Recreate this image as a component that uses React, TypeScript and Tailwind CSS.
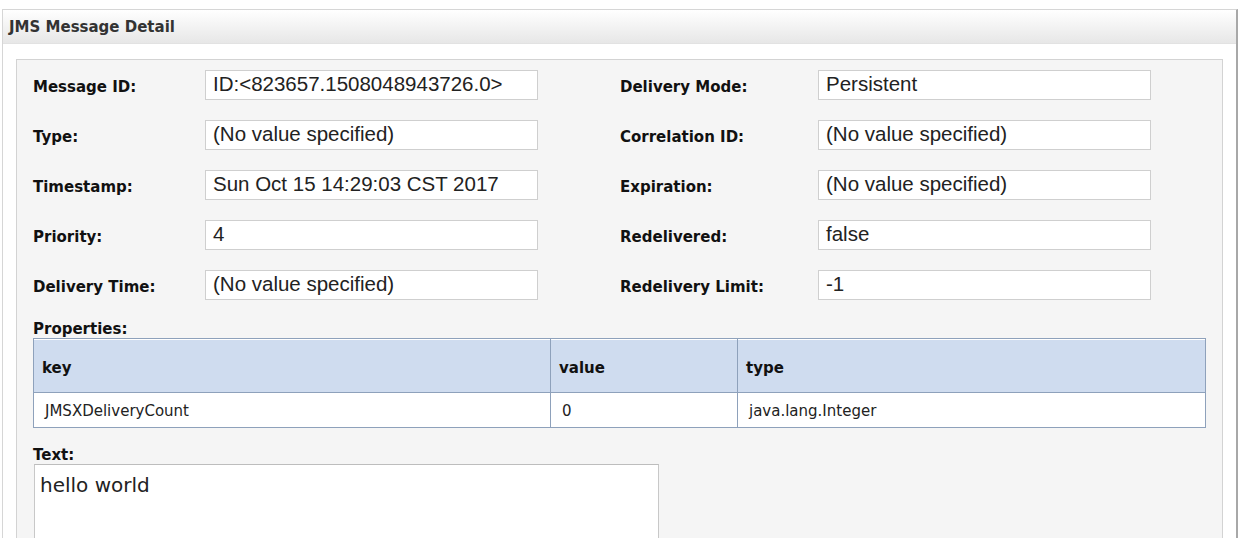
import React from "react";

const tahoma = "font-['DejaVu_Sans','Verdana',sans-serif]";
const arial = "font-['Liberation_Sans',Arial,sans-serif]";

interface FieldProps {
    label: string;
    value: string;
    labelWidth: string;
}

const Field: React.FC<FieldProps> = ({ label, value, labelWidth }) => (
    <div className="flex items-center h-[30px]">
        <div className={ `${ tahoma } ${ labelWidth } shrink-0 text-[15px] font-bold text-[#111] pt-[4px]` }>{ label }</div>
        <div className={ `${ arial } w-[333px] h-[30px] bg-white border border-[#cfcfcf] pl-[7px] text-[20.5px] leading-[25px] text-[#222] whitespace-nowrap overflow-hidden` }>
            { value }
        </div>
    </div>
);

const left = [
    { label: "Message ID:", value: "ID:<823657.1508048943726.0>" },
    { label: "Type:", value: "(No value specified)" },
    { label: "Timestamp:", value: "Sun Oct 15 14:29:03 CST 2017" },
    { label: "Priority:", value: "4" },
    { label: "Delivery Time:", value: "(No value specified)" },
];

const right = [
    { label: "Delivery Mode:", value: "Persistent" },
    { label: "Correlation ID:", value: "(No value specified)" },
    { label: "Expiration:", value: "(No value specified)" },
    { label: "Redelivered:", value: "false" },
    { label: "Redelivery Limit:", value: "-1" },
];

export default function App() {
    return (
        <div className="w-[1240px] h-[538px] overflow-hidden bg-white pt-[9px] pl-[2px]">
            <div className="w-[1236px] h-[540px] border border-[#d6d6d6] border-r-[#a8a8a8] border-r-2 bg-white">
                <div className="h-[34px] flex items-center pl-[6px] bg-gradient-to-b from-white to-[#e7e7e7] border-b border-[#e2e2e2]">
                    <span className={ `${ tahoma } text-[15px] font-bold text-[#333] pt-[2px]` }>JMS Message Detail</span>
                </div>
                <div className="pt-[15px] pl-[13px] pr-[13px]">
                    <div className="h-[500px] border border-[#d3d3d3] bg-[#f5f5f5] pt-[10px] pl-[16px]">
                        <div className="flex">
                            <div className="flex flex-col gap-[20px]">
                                { left.map((f) => <Field key={ f.label } label={ f.label } value={ f.value } labelWidth="w-[172px]" />) }
                            </div>
                            <div className="flex flex-col gap-[20px] ml-[82px]">
                                { right.map((f) => <Field key={ f.label } label={ f.label } value={ f.value } labelWidth="w-[198px]" />) }
                            </div>
                        </div>

                        <div className={ `${ tahoma } mt-[19px] pt-[1px] text-[15px] font-bold text-[#111] leading-[18px]` }>Properties:</div>
                        <table className={ `${ tahoma } w-[1173px] border-collapse text-[15px] text-[#222]` }>
                            <thead>
                                <tr className="h-[54px] bg-[#cfdcef]">
                                    <th className="w-[517px] border border-[#8ea1bb] text-left font-bold pl-[8px] text-[#111] shadow-[inset_0_1px_0_#fff] pt-[5px]">key</th>
                                    <th className="w-[187px] border border-[#8ea1bb] text-left font-bold pl-[8px] text-[#111] shadow-[inset_0_1px_0_#fff] pt-[5px]">value</th>
                                    <th className="border border-[#8ea1bb] text-left font-bold pl-[8px] text-[#111] shadow-[inset_0_1px_0_#fff] pt-[5px]">type</th>
                                </tr>
                            </thead>
                            <tbody>
                                <tr className="h-[35px] bg-white">
                                    <td className="border border-[#8ea1bb] pl-[11px] pt-[2px]">JMSXDeliveryCount</td>
                                    <td className="border border-[#8ea1bb] pl-[11px] pt-[2px]">0</td>
                                    <td className="border border-[#8ea1bb] pl-[11px] pt-[2px]">java.lang.Integer</td>
                                </tr>
                            </tbody>
                        </table>

                        <div className={ `${ tahoma } mt-[18px] text-[15px] font-bold text-[#111] leading-[18px]` }>Text:</div>
                        <div className={ `${ tahoma } ml-[1px] w-[625px] h-[120px] bg-white border border-[#c8c8c8] border-t-[#bdbdbd] pl-[5px] pt-[5px] text-[20px] text-[#222]` }>
                            hello world
                        </div>
                    </div>
                </div>
            </div>
        </div>
    );
}
